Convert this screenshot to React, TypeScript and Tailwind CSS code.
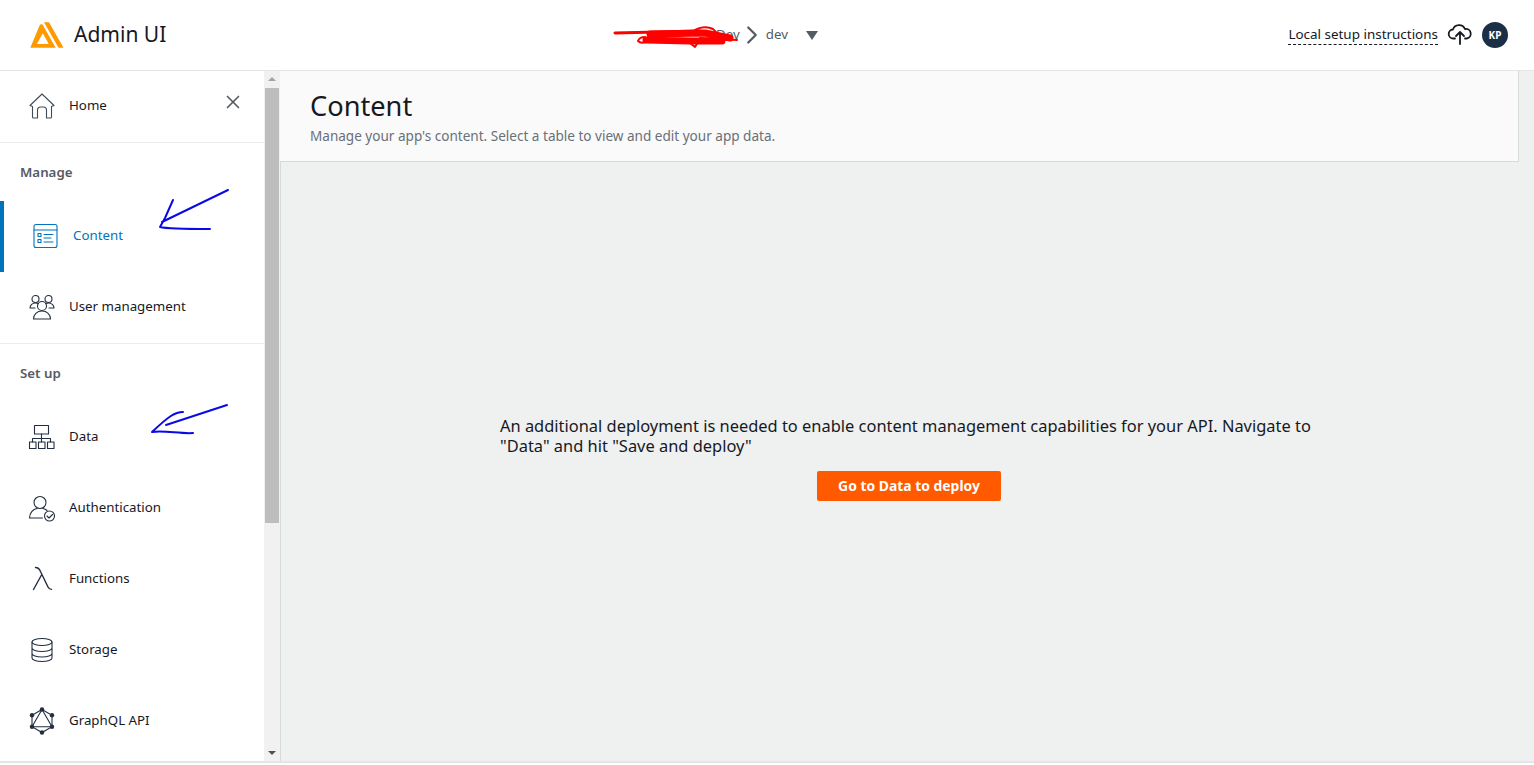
import { ChevronRight, X } from "lucide-react";
import type { ReactNode } from "react";

const font = "font-['Noto_Sans',sans-serif]";

function Logo() {
  return (
    <svg width="34" height="26" viewBox="0 0 34 26" fill="#ff9900">
      <path d="M14 0.200h5l14.500 25.600h-5z" />
      <path d="M10 2.500l2.400-.2 13.300 23.500H0.300zM6.800 22h12l-6-10.800z" fillRule="evenodd" />
    </svg>
  );
}

function NavIcon({ children, color = "#232f3e" }: { children: ReactNode; color?: string }) {
  return (
    <svg width="28" height="28" viewBox="0 0 28 28" fill="none" stroke={color} strokeWidth="1.1" strokeLinejoin="round" strokeLinecap="round">
      {children}
    </svg>
  );
}

const HomeIcon = (
  <NavIcon color="#3f4b5b">
    <path d="M2 13.500 14 2l12 11.500-2.500 1v10.500a1 1 0 0 1-1 1H18.500V18a3 3 0 0 0-3-3h-3a3 3 0 0 0-3 3v8H5.500a1 1 0 0 1-1-1V14.500z" />
  </NavIcon>
);

const ContentIcon = (
  <NavIcon color="#0073bb">
    <rect x="2" y="2.500" width="23" height="23" rx="2" />
    <path d="M2 8h23M12 12.500h9M12 16h7M12 20h9" />
    <rect x="6" y="11.500" width="3" height="3" />
    <rect x="6" y="17.500" width="3" height="3" />
  </NavIcon>
);

const UsersIcon = (
  <NavIcon>
    <circle cx="7.500" cy="6" r="3.500" />
    <circle cx="20.500" cy="6" r="3.500" />
    <path d="M2 15c0-3 2.500-5 5.500-5 1.200 0 2 .3 3 .8M26 15c0-3-2.500-5-5.500-5-1.200 0-2 .3-3 .8M2 15h5M26 15h-5" />
    <circle cx="14" cy="13" r="4.500" />
    <path d="M5.500 26c0-4.500 3.500-8 8.500-8s8.500 3.500 8.500 8z" />
  </NavIcon>
);

const DataIcon = (
  <NavIcon>
    <rect x="6.500" y="2.500" width="14" height="8.500" />
    <rect x="1.500" y="19" width="6.500" height="6.500" />
    <rect x="10.500" y="19" width="6.500" height="6.500" />
    <rect x="19.500" y="19" width="6.500" height="6.500" />
    <path d="M13.500 11v8M4.500 19v-3.500h18V19" />
  </NavIcon>
);

const AuthIcon = (
  <NavIcon>
    <circle cx="12" cy="8.500" r="6" />
    <path d="M1.500 24c0-5 3.500-9 7.500-9.500M15 14.500c1.500.3 3 1 4 2M1.500 24h13" />
    <circle cx="21.500" cy="22" r="5" />
    <path d="M19 22l2 2 3.500-3.500" />
  </NavIcon>
);

const LambdaIcon = (
  <NavIcon>
    <path d="M7.500 2.500c3 0 4 1.500 5 4l7.500 15.500c.8 1.600 2 2.400 3.500 2.400M13.500 10 5.500 24.500" strokeWidth="1.400" />
  </NavIcon>
);

const StorageIcon = (
  <NavIcon>
    <ellipse cx="14" cy="6" rx="10" ry="3.500" />
    <path d="M4 6v16c0 2 4.500 3.500 10 3.500s10-1.500 10-3.500V6M4 12c0 2 4.500 3.500 10 3.500S24 14 24 12M4 17.500c0 2 4.500 3.500 10 3.500s10-1.500 10-3.500" />
  </NavIcon>
);

const GraphqlIcon = (
  <svg width="28" height="28" viewBox="0 0 28 28" fill="none" stroke="#232f3e" strokeWidth="1.100">
    <path d="M14 2.500 24 8.300v11.400L14 25.500 4 19.700V8.300z" />
    <path d="M14 2.500 24 19.700H4z" />
    <g fill="#232f3e" stroke="none">
      <circle cx="14" cy="2.500" r="2.200" />
      <circle cx="24" cy="8.300" r="2.200" />
      <circle cx="24" cy="19.700" r="2.200" />
      <circle cx="14" cy="25.500" r="2.200" />
      <circle cx="4" cy="19.700" r="2.200" />
      <circle cx="4" cy="8.300" r="2.200" />
    </g>
  </svg>
);

function NavItem({ icon, label, active, lift }: { icon: ReactNode; label: string; active?: boolean; lift?: boolean }) {
  return (
    <div className={`flex h-[71px] shrink-0 items-center ${lift ? "pb-[2px]" : ""} ${active ? "border-l-4 border-[#0073bb] pl-[28px] text-[#0073bb]" : "pl-[28px] text-[#16191f]"}`}>
      <span className="flex w-[41px] shrink-0 items-center">{icon}</span>
      <span className="text-[13.3px]">{label}</span>
    </div>
  );
}

export default function App() {
  return (
    <div className={`relative flex h-[765px] w-[1534px] flex-col overflow-hidden bg-white ${font}`}>
      <header className="flex h-[71px] shrink-0 items-center justify-between border-b border-[#e4e6e6] pl-[30px] pr-[26px]">
        <div className="flex items-center gap-[10px]">
          <Logo />
          <span className="text-[21px] text-[#16191f]">Admin UI</span>
        </div>
        <div className="flex items-center text-[13.3px] text-[#545b64]">
          <span className="w-[103px] text-right">Dev</span>
          <ChevronRight size={30} strokeWidth={1.8} className="ml-[-3px] mr-[-1px] text-[#545b64]" />
          <span>dev</span>
          <span className="ml-[18px] h-0 w-0 border-x-[6px] border-t-[9px] border-x-transparent border-t-[#545b64]" />
        </div>
        <div className="flex items-center">
          <span className="border-b border-dashed border-[#16191f] text-[13.45px] leading-[19px] text-[#16191f]">Local setup instructions</span>
          <svg className="ml-[9px]" width="26" height="24" viewBox="0 0 26 24" fill="none" stroke="#16191f" strokeWidth="1.800" strokeLinecap="round" strokeLinejoin="round">
            <path d="M8 15.500H6.500a4.500 4.500 0 0 1-.6-9A6.500 6.500 0 0 1 18 6a4.800 4.800 0 0 1 1.800 9.500H18" />
            <path d="M13 21V9.500M9 13l4-4 4 4" />
          </svg>
          <span className="ml-[9px] flex h-[26px] w-[26px] items-center justify-center rounded-full bg-[#1b2f45] text-[10px] font-bold text-white">KP</span>
        </div>
      </header>

      <div className="mb-[2px] flex min-h-0 flex-1 border-b-2 border-[#e4e6e6]">
        <aside className="relative flex w-[264px] shrink-0 flex-col overflow-hidden">
          <div className="flex h-[72px] shrink-0 items-center border-b border-[#eaeded] pb-[2px] pl-[28px] text-[13.3px] text-[#16191f]">
            <span className="flex w-[41px] shrink-0 items-center">{HomeIcon}</span>
            <span>Home</span>
            <X size={22} strokeWidth={1.800} className="ml-auto mr-[20px] mt-[-7px] text-[#545b64]" />
          </div>
          <div className="flex h-[58px] shrink-0 items-center pl-5 pt-px text-[13.3px] font-semibold text-[#545b64]">Manage</div>
          <NavItem icon={ContentIcon} label="Content" active lift />
          <NavItem icon={UsersIcon} label="User management" lift />
          <div className="h-px shrink-0 bg-[#eaeded]" />
          <div className="flex h-[57px] shrink-0 items-center pl-5 pt-[2px] text-[13.3px] font-semibold text-[#545b64]">Set up</div>
          <NavItem icon={DataIcon} label="Data" />
          <NavItem icon={AuthIcon} label="Authentication" />
          <NavItem icon={LambdaIcon} label="Functions" />
          <NavItem icon={StorageIcon} label="Storage" />
          <NavItem icon={GraphqlIcon} label="GraphQL API" />
        </aside>

        <div className="flex w-[16px] shrink-0 flex-col items-center bg-[#f1f1f1]">
          <span className="mt-[6px] h-0 w-0 border-x-[4px] border-b-[4px] border-x-transparent border-b-[#a3a3a3]" />
          <div className="mt-[7px] h-[435px] w-[14px] bg-[#bdbdbd]" />
          <span className="mb-[6px] mt-auto h-0 w-0 border-x-[4px] border-t-[4px] border-x-transparent border-t-[#505050]" />
        </div>

        <main className="flex min-w-0 flex-1 flex-col bg-[#eff0f0]">
          <div className="mr-[15px] h-[91px] shrink-0 border-b border-r border-[#d5dbdb] bg-[#fafafa] pl-[30px] pt-[16px]">
            <h1 className="text-[27.2px] leading-[37px] text-[#16191f]">Content</h1>
            <p className="mt-[2px] text-[13.55px] leading-[20px] text-[#687078]">Manage your app's content. Select a table to view and edit your app data.</p>
          </div>
          <div className="flex flex-1 flex-col border-l border-[#d5dbdb] pl-[219px] pt-[254px]">
            <p className="w-[830px] text-[16.43px] leading-[20px] text-[#16191f]">
              An additional deployment is needed to enable content management capabilities for your API. Navigate to "Data" and hit "Save and deploy"
            </p>
            <button className="ml-[317px] mt-[15px] h-[30px] w-[184px] rounded-[2px] bg-[#ff5a00] text-[13.9px] font-bold text-white">Go to Data to deploy</button>
          </div>
        </main>
      </div>

      {/* marks drawn over the screenshot */}
      <svg className="pointer-events-none absolute left-0 top-0" width="1534" height="765" fill="none" strokeLinecap="round" strokeLinejoin="round">
        <path d="M228 190 162 222M173 200 165 218 160 227c8 2 30 2 50 2" stroke="#0a0ae6" strokeWidth="2" />
        <path d="M227 405 166 425M183 412c-8 0-14 4-31 20 12-2 28 2 41 1" stroke="#0a0ae6" strokeWidth="2" />
        <g stroke="#ff0000">
          <path d="M615 33 700 31" strokeWidth="3" />
          <path d="M650 34 705 33 730 38M646 40 690 41 722 41" strokeWidth="7" />
          <path d="M693 32c4-5 14-6 20-3 4 3 4 6 6 8M638 41c1-3 4-4 7-4M638 41c2 2 5 2 8 1M690 43l5 4 3-5M700 38l37 2" strokeWidth="2" />
        </g>
      </svg>
    </div>
  );
}
